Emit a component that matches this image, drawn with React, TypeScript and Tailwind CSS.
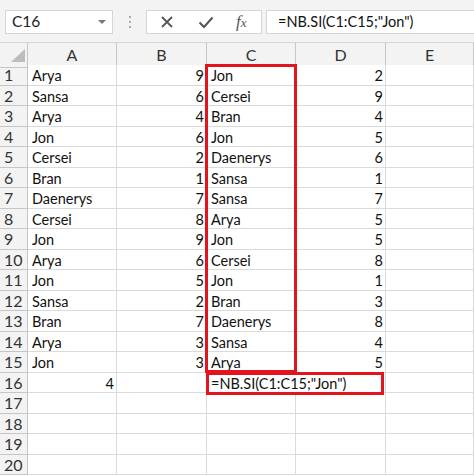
import React from 'react';

const colA = ['Arya', 'Sansa', 'Arya', 'Jon', 'Cersei', 'Bran', 'Daenerys', 'Cersei', 'Jon', 'Arya', 'Jon', 'Sansa', 'Bran', 'Arya', 'Jon'];
const colB = [9, 6, 4, 6, 2, 1, 7, 8, 9, 6, 5, 2, 7, 3, 3];
const colC = ['Jon', 'Cersei', 'Bran', 'Jon', 'Daenerys', 'Sansa', 'Sansa', 'Arya', 'Jon', 'Cersei', 'Jon', 'Bran', 'Daenerys', 'Sansa', 'Arya'];
const colD = [2, 9, 4, 5, 6, 1, 7, 5, 5, 8, 1, 3, 8, 4, 5];

const FORMULA = '=NB.SI(C1:C15;"Jon")';

const cols = 'grid grid-cols-[28px_89px_90px_89px_90px_88px]';

const Cell: React.FC<{ children?: React.ReactNode; right?: boolean; span?: boolean }> = ({ children, right, span }) => (
  <div
    className={`h-[20.5px] border-b border-r border-[#dadada] bg-white text-[14.5px] leading-[21px] text-[#111] whitespace-nowrap ${
      right ? 'pr-[2px] text-right' : 'pl-[4px]'
    } ${span ? 'col-span-2' : ''}`}
  >
    {children}
  </div>
);

export default function App() {
  const rows = Array.from({ length: 20 }, (_, i) => i);

  return (
    <div
      className="h-[476px] w-[474px] overflow-hidden bg-white"
      style={{ fontFamily: 'Lato, "Noto Sans", sans-serif' }}
    >
      {/* formula bar */}
      <div className="flex h-[43px] items-start border-b border-[#d4d4d4] bg-[#f3f3f3] pt-[10px]">
        <div className="ml-[5px] flex h-[24px] w-[108px] items-center justify-between border border-[#d6d6d6] bg-white pl-[6px] pr-[6px] text-[15.5px] text-[#222]">
          <span>C16</span>
          <svg width="8" height="5" viewBox="0 0 8 5">
            <path d="M0 0h8L4 4z" fill="#777" />
          </svg>
        </div>
        <div className="flex w-[33px] flex-col items-center justify-center gap-[3px] pt-[6px]">
          <span className="h-[2px] w-[2px] bg-[#aaa]" />
          <span className="h-[2px] w-[2px] bg-[#aaa]" />
          <span className="h-[2px] w-[2px] bg-[#aaa]" />
        </div>
        <div className="flex h-[24px] w-[116px] items-center border border-[#d6d6d6] bg-white">
          <svg className="ml-[13px]" width="14" height="14" viewBox="0 0 14 14">
            <path d="M2 2l10 10M12 2L2 12" stroke="#555" strokeWidth="1.8" fill="none" />
          </svg>
          <svg className="ml-[24px]" width="16" height="14" viewBox="0 0 16 14">
            <path d="M1.5 7.5l4.5 4.5L14.5 2.5" stroke="#555" strokeWidth="2" fill="none" />
          </svg>
          <span
            className="ml-[22px] text-[17px] italic text-[#555]"
            style={{ fontFamily: '"Liberation Serif", serif' }}
          >
            f<span className="text-[13px]">x</span>
          </span>
        </div>
        <div className="ml-[4px] flex h-[24px] flex-1 items-center border border-r-0 border-[#d6d6d6] bg-white pl-[11px] text-[14.5px] text-[#111]">
          {FORMULA}
        </div>
      </div>

      {/* sheet */}
      <div className="relative">
        <div className={`${cols} h-[22px] bg-[#f3f3f3] text-[16px] text-[#333]`}>
          <div className="relative border-b border-r border-[#c6c6c6]">
            <svg className="absolute left-[11px] top-[6px]" width="14" height="13" viewBox="0 0 14 13">
              <path d="M14 0V13H0z" fill="#bdbdbd" />
            </svg>
          </div>
          {['A', 'B', 'C', 'D', 'E'].map((c) => (
            <div key={c} className="flex items-center justify-center border-b border-r border-[#c6c6c6]">
              {c}
            </div>
          ))}
        </div>

        {rows.map((i) => (
          <div key={i} className={cols}>
            <div className="h-[20.5px] border-b border-r border-[#c6c6c6] bg-[#f3f3f3] pl-[4px] text-[16px] leading-[20px] text-[#333]">
              {i + 1}
            </div>
            {i < 15 ? (
              <>
                <Cell>{colA[i]}</Cell>
                <Cell right>{colB[i]}</Cell>
                <Cell>{colC[i]}</Cell>
                <Cell right>{colD[i]}</Cell>
                <Cell />
              </>
            ) : i === 15 ? (
              <>
                <Cell right>4</Cell>
                <Cell />
                <Cell span>{FORMULA}</Cell>
                <Cell />
              </>
            ) : (
              <>
                <Cell />
                <Cell />
                <Cell />
                <Cell />
                <Cell />
              </>
            )}
          </div>
        ))}

        {/* highlight boxes */}
        <div className="pointer-events-none absolute left-[205px] top-[21px] h-[309px] w-[92px] border-[3px] border-[#e3141e]" />
        <div className="pointer-events-none absolute left-[206px] top-[329px] h-[23px] w-[178px] border-[3px] border-[#e3141e]" />
      </div>
    </div>
  );
}
